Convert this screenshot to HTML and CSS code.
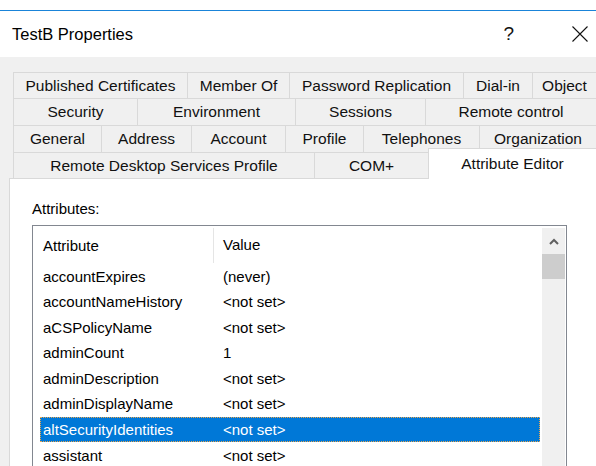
FILE: index.html
```html
<!DOCTYPE html>
<html>
<head>
<meta charset="utf-8">
<title>TestB Properties</title>
<link rel="stylesheet" href="styles.css">
</head>
<body>
<div class="topstrip"></div>
<div class="titlebar">
  <span class="title">TestB Properties</span>
  <span class="help">?</span>
  <svg class="close" width="16" height="16" viewBox="0 0 16 16"><path d="M0.5 0.5 L15.5 15.5 M15.5 0.5 L0.5 15.5" stroke="#111" stroke-width="1.1" fill="none"/></svg>
</div>
<div class="dlg">
  <div class="tabs">
    <div class="tabrow r1">
      <div class="tab">Published Certificates</div>
      <div class="tab">Member Of</div>
      <div class="tab">Password Replication</div>
      <div class="tab">Dial-in</div>
      <div class="tab">Object</div>
    </div>
    <div class="tabrow r2">
      <div class="tab">Security</div>
      <div class="tab">Environment</div>
      <div class="tab">Sessions</div>
      <div class="tab">Remote control</div>
    </div>
    <div class="tabrow r3">
      <div class="tab">General</div>
      <div class="tab">Address</div>
      <div class="tab">Account</div>
      <div class="tab">Profile</div>
      <div class="tab">Telephones</div>
      <div class="tab">Organization</div>
    </div>
    <div class="tabrow r4">
      <div class="tab">Remote Desktop Services Profile</div>
      <div class="tab">COM+</div>
      <div class="tab sel">Attribute Editor</div>
    </div>
  </div>
  <div class="panel">
    <div class="label">Attributes:</div>
    <div class="listbox">
      <div class="list">
        <div class="header">
          <div class="hcol1">Attribute</div>
          <div class="hcol2">Value</div>
        </div>
        <div class="row"><span>accountExpires</span><span>(never)</span></div>
        <div class="row"><span>accountNameHistory</span><span>&lt;not set&gt;</span></div>
        <div class="row"><span>aCSPolicyName</span><span>&lt;not set&gt;</span></div>
        <div class="row"><span>adminCount</span><span>1</span></div>
        <div class="row"><span>adminDescription</span><span>&lt;not set&gt;</span></div>
        <div class="row"><span>adminDisplayName</span><span>&lt;not set&gt;</span></div>
        <div class="row sel"><span>altSecurityIdentities</span><span>&lt;not set&gt;</span></div>
        <div class="row last"><span>assistant</span><span>&lt;not set&gt;</span></div>
      </div>
      <div class="scrollbar">
        <div class="up"><svg width="10" height="7" viewBox="0 0 10 7"><path d="M1 6 L5 2 L9 6" stroke="#606060" stroke-width="2" fill="none"/></svg></div>
        <div class="thumb"></div>
      </div>
    </div>
  </div>
</div>
</body>
</html>
```

FILE: styles.css
```css
html, body {
  margin: 0;
  padding: 0;
}
body {
  width: 596px;
  height: 466px;
  overflow: hidden;
  background: #fff;
  font-family: "Liberation Sans", Arial, sans-serif;
  color: #000;
}
.topstrip {
  height: 10px;
  background: #fff;
  border-bottom: 1px solid #1a84d9;
}
.titlebar {
  height: 46px;
  display: flex;
  align-items: center;
  background: #fff;
}
.title {
  flex: 1;
  margin-left: 12px;
  font-size: 16.5px;
  color: #000;
}
.help {
  font-size: 19px;
  margin-right: 58px;
  color: #111;
}
.close {
  margin-right: 8px;
  display: block;
}
.dlg {
  background: #f0f0f0;
  height: 409px;
  padding: 15px 0 0 9px;
  box-sizing: border-box;
  overflow: hidden;
}
.tabs {
  margin-left: 4px;
  width: 583px;
}
.tabrow {
  display: grid;
}
.r1 { grid-template-columns: 174px 102px 174px 69px 1fr; height: 26px; }
.r2 { grid-template-columns: 124px 158px 130px 1fr; height: 27px; }
.r3 { grid-template-columns: 88px 90px 94px 78px 116px 1fr; height: 27px; }
.r4 { grid-template-columns: 301px 114px 1fr; height: 26px; }
.tab {
  border-top: 1px solid #d9d9d9;
  border-left: 1px solid #d9d9d9;
  display: flex;
  align-items: center;
  justify-content: center;
  font-size: 15.5px;
  white-space: nowrap;
  color: #111;
}
.tab.sel {
  background: #fff;
  margin-top: -4px;
  margin-bottom: -1px;
  position: relative;
  z-index: 1;
}
.panel {
  background: #fff;
  border-top: 1px solid #d9d9d9;
  border-left: 1px solid #d9d9d9;
  width: 587px;
  height: 288px;
  box-sizing: border-box;
  padding: 21px 0 0 22px;
  overflow: hidden;
}
.label {
  font-size: 15px;
  line-height: 18px;
  height: 18px;
  margin-bottom: 7px;
}
.listbox {
  width: 535px;
  height: 242px;
  border: 1px solid #828790;
  border-bottom: 0;
  box-sizing: border-box;
  display: flex;
  overflow: hidden;
}
.list {
  flex: 1;
  font-size: 15px;
}
.header {
  height: 37.5px;
  display: flex;
}
.hcol1 {
  width: 170px;
  padding-left: 10px;
  margin: 2px 0 1px 0;
  border-right: 1px solid #e5e5e5;
  display: flex;
  align-items: center;
}
.hcol2 {
  padding-left: 9px;
  display: flex;
  align-items: center;
}
.row {
  display: grid;
  grid-template-columns: 180px 1fr;
  align-items: center;
  height: 25.5px;
  margin: 0 2px 0 7px;
  padding-left: 3px;
  white-space: nowrap;
}
.row.last {
  height: 24px;
  box-sizing: border-box;
  padding-top: 6px;
  align-items: start;
  line-height: 16px;
}
.row.sel {
  background: #0078d7;
  color: #fff;
  outline: 1px dotted #e9a64e;
  outline-offset: -1px;
}
.scrollbar {
  width: 23px;
  margin: 2px 1px 0 0;
  background: #f0f0f0;
}
.up {
  height: 26px;
  display: flex;
  align-items: center;
  justify-content: center;
}
.up svg { display: block; }
.thumb {
  height: 25px;
  background: #cdcdcd;
}
```
